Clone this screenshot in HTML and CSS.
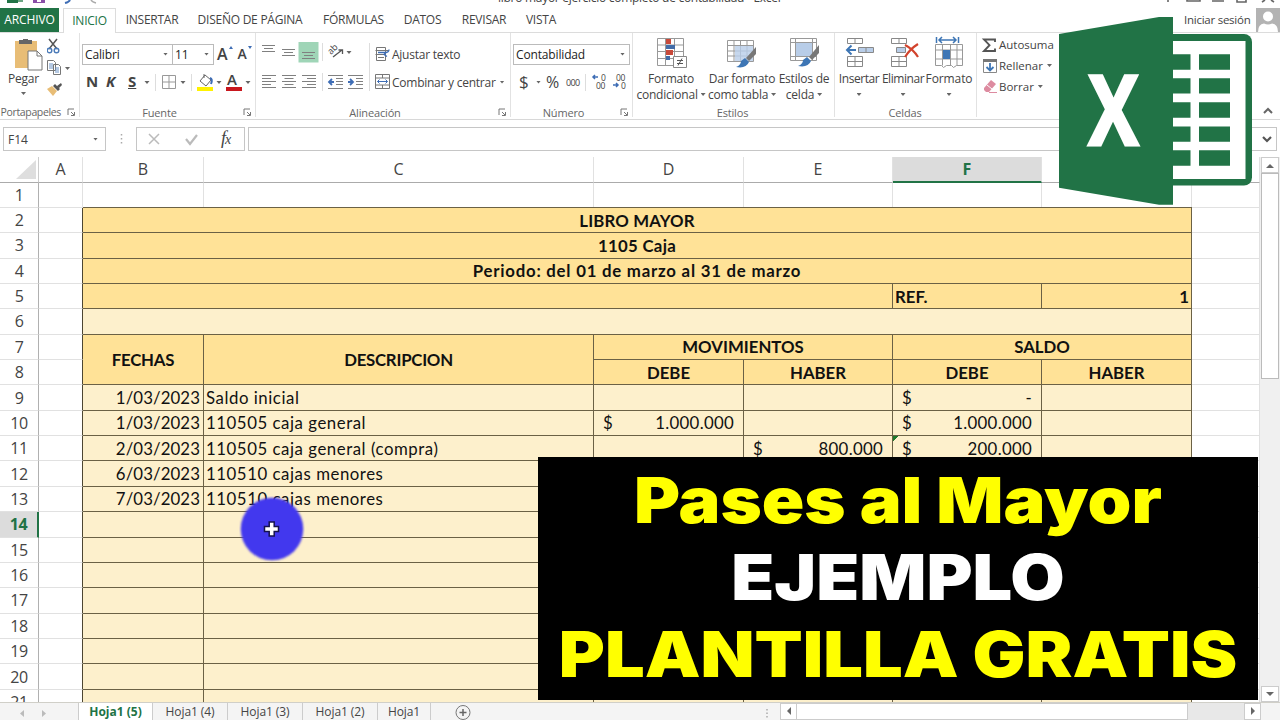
FILE: index.html
```html
<!DOCTYPE html>
<html lang="es">
<head>
<meta charset="utf-8">
<title>Libro mayor - Excel</title>
<link rel="stylesheet" href="styles.css">
</head>
<body>
<div class="app">
  <header class="titlebar">
    <svg class="quick" width="110" height="8"><path d="M7 0h11v3H7z" fill="#217346"/><path d="M18 0h5v2h-5z" fill="#6aa583"/><path d="M33 0h12v3H33z" fill="#8a4fa8"/><path d="M37 0h4v2h-4z" fill="#fff"/><path d="M65 3q4-1 5-3" stroke="#3e6db5" stroke-width="2" fill="none"/><path d="M91 0q1 2 5 3" stroke="#aaa" stroke-width="1.5" fill="none"/></svg>
    <span class="doc">libro mayor ejercicio completo de contabilidad - Excel</span>
    <svg class="win" width="120" height="8"><path d="M8 0v2M27 0v1h13V0M52 1h12M77 0v2h9V0M102 2l3-2M111 0l3 2" stroke="#666" stroke-width="1.6" fill="none"/></svg>
  </header>
  <nav class="tabs">
    <span class="tab file">ARCHIVO</span>
    <span class="tab active">INICIO</span>
    <span class="tab w72">INSERTAR</span>
    <span class="tab w124">DISEÑO DE PÁGINA</span>
    <span class="tab w83">FÓRMULAS</span>
    <span class="tab w55">DATOS</span>
    <span class="tab w68">REVISAR</span>
    <span class="tab w46">VISTA</span>
    <span class="signin">Iniciar sesión</span>
    <svg class="avatar" width="24" height="24"><path d="M0 0h24v24H0z" fill="#b3b3b3"/><circle cx="12" cy="8.500" r="5" fill="#fff"/><path d="M2 24q0-8 6-8.500q4 2 8 0q6 .5 6 8.500z" fill="#fff"/></svg>
  </nav>

  <section class="ribbon">
    <div class="group g-clip">
      <div class="body">
        <div class="big paste">
          <svg width="44" height="37"><path d="M13 7h22v27H13z" fill="#e8bd76"/><path d="M17 6h4V5h5v1h4v4H17z" fill="#666"/><path d="M26 17h9l5 5v14H26z" fill="#fff" stroke="#777"/><path d="M35 17v5h5" fill="none" stroke="#777"/></svg>
          <span>Pegar</span><i class="caret"></i>
        </div>
        <svg width="30" height="70"><g fill="none"><path d="M2 6l8 10M10 6L2 16" stroke="#555" stroke-width="1.500"/><circle cx="2.500" cy="17.500" r="2.300" stroke="#4a7ab8" stroke-width="1.400"/><circle cx="9.500" cy="17.500" r="2.300" stroke="#4a7ab8" stroke-width="1.400"/><path d="M.5 27.500h6l2 2v8h-8zM6.500 31.500h5l2 2v8h-7z" fill="#fff" stroke="#777"/><path d="M2 31h4M2 33h4M2 35h4M8 35h4M8 37h4M8 39h4" stroke="#6b93c7"/></g><path d="M18 34h5l-2.500 3z" fill="#666"/><path d="M0 56l5-3 5 5-4 5z" fill="#e8bd76"/><path d="M6 53l2-2 5 5-2 2zM10 53l4-3 1 2-3 3z" fill="#555"/></svg>
      </div>
      <div class="foot"><span>Portapapeles</span><svg class="launch" width="8" height="8"><path d="M1 7V1h6M4 4l3 3M7.500 4v3.500H4" fill="none" stroke="#777"/></svg></div>
    </div>

    <div class="group g-font">
      <div class="body col">
        <div class="row r1">
          <span class="combo c-font">Calibri<i class="caret"></i></span><span class="combo c-size">11<i class="caret"></i></span>
          <span class="grow">A</span><svg width="6" height="18"><path d="M1 4l2-3 2 3z" fill="#3e6db5"/></svg>
          <span class="shrink">A</span><svg width="6" height="18"><path d="M1 1h4L3 4z" fill="#3e6db5"/></svg>
        </div>
        <div class="row r2">
          <b class="n">N</b><b class="k">K</b><b class="s">S</b>
          <svg width="112" height="22"><g stroke="#ddd"><path d="M14.500 3v17M50.500 3v17"/></g><path d="M3.500 10h5l-2.500 3zM39.500 10h5L42 13zM75.500 10h5L78 13zM104.500 10h5l-2.500 3z" fill="#666"/><path d="M21.500 4.500h13v13h-13zM28 4.500v13M21.500 11h13" fill="none" stroke="#999" stroke-width="1"/><path d="M56 16h16v4H56z" fill="#fff200"/><path d="M59 10l5-6 6 5-5 6z" fill="#fff" stroke="#666"/><path d="M63 7V3" stroke="#666"/><path d="M69 7q3 1 1 6" stroke="#3e6db5" stroke-width="2" fill="none"/><path d="M85 16h16v4H85z" fill="#c8171e"/></svg><span class="fa">A</span>
        </div>
      </div>
      <div class="foot"><span class="mid">Fuente</span><svg class="launch" width="8" height="8"><path d="M1 7V1h6M4 4l3 3M7.500 4v3.500H4" fill="none" stroke="#777"/></svg></div>
    </div>

    <div class="group g-align">
      <div class="body">
        <svg width="117" height="70"><path d="M42.500 9h20v20.500h-20z" fill="#9fd5b7"/><g stroke="#ddd"><path d="M66.500 10v18M66.500 40v18M113.500 10v48"/></g><g stroke="#808080" fill="none"><path d="M6 12.500h13M8 15.500h9M6 18.500h13M26 16.500h13M28 19.500h9M26 22.500h13M46 19.500h13M48 22.500h9M46 25.500h13"/><path d="M6 42.500h14M6 45.500h9M6 48.500h14M6 51.500h9M6 54.500h14M26 42.500h14M28.500 45.500h9M26 48.500h14M28.500 51.500h9M26 54.500h14M46 42.500h14M51 45.500h9M46 48.500h14M51 51.500h9M46 54.500h14M72 42.500h15M80 45.500h7M80 48.500h7M80 51.500h7M72 55.500h15M92 42.500h15M100 45.500h7M100 48.500h7M100 51.500h7M92 55.500h15"/><path d="M77 24l9-7M82.500 17h4v4" stroke="#555" stroke-width="1.300"/></g><path d="M90.500 18h5L93 21z" fill="#666"/><path d="M78 49h-5m3-3l-3 3 3 3M92 49h5m-3-3l3 3-3 3" fill="none" stroke="#3e6db5" stroke-width="1.800"/><text class="ab" transform="translate(75 22) rotate(-45)">ab</text></svg>
        <div class="col wraps">
          <div class="row r1"><svg width="18" height="18"><path d="M2.500 2.500h9v13h-9zM1.500 5.500h13M1.500 9.500h9M4 12.500h6" fill="none" stroke="#777"/><path d="M4 7.500h7q4 0 4-3M13 7l-3 2.500 3 2" fill="none" stroke="#3e6db5" stroke-width="1.300"/></svg><span>Ajustar texto</span></div>
          <div class="row r2"><svg width="18" height="18"><path d="M1.500 1.500h14v14h-14zM1.500 5h14M1.500 12h14M8.500 1.500V5M8.500 12v3.500" fill="none" stroke="#777"/><path d="M3.500 8.500h10M5.500 6.500l-2 2 2 2M11.500 6.500l2 2-2 2" fill="none" stroke="#3e6db5"/></svg><span>Combinar y centrar</span><i class="caret"></i></div>
        </div>
      </div>
      <div class="foot"><span class="mid">Alineación</span><svg class="launch" width="8" height="8"><path d="M1 7V1h6M4 4l3 3M7.500 4v3.500H4" fill="none" stroke="#777"/></svg></div>
    </div>

    <div class="group g-num">
      <div class="body col">
        <div class="row r1"><span class="combo c-num">Contabilidad<i class="caret"></i></span></div>
        <div class="row r2"><span class="dollar">$</span><i class="caret"></i><span class="pct">%</span><span class="zeros">000</span><svg width="40" height="22"><path d="M4.500 3v17" stroke="#ddd"/><path d="M17 6h-5m2-2l-2 2 2 2M32 14h5m-2-2l2 2-2 2" fill="none" stroke="#3e6db5" stroke-width="1.500"/><g class="dec"><text x="20" y="10">0</text><text x="15" y="18">00</text></g></svg><svg class="dec2" width="20" height="22"><g class="dec"><text x="4" y="10">00</text><text x="9" y="18">0</text></g></svg></div>
      </div>
      <div class="foot"><span class="mid">Número</span><svg class="launch" width="8" height="8"><path d="M1 7V1h6M4 4l3 3M7.500 4v3.500H4" fill="none" stroke="#777"/></svg></div>
    </div>

    <div class="group g-styles">
      <div class="body">
        <div class="big b1"><svg width="34" height="36"><path d="M3.500 5.500h26v27h-26zM3.500 12h26M3.500 18.500h26M3.500 25.500h26M11.500 5.500v27M20.500 5.500v27" fill="#fff" stroke="#999"/><path d="M12 6h5v5h-5zM12 17h7v5h-7z" fill="#c8493a"/><path d="M12 12h9v4h-9zM12 23h4v4h-4z" fill="#426ca8"/><path d="M19.500 23.500h13v11h-13z" fill="#fff" stroke="#888"/><path d="M23 27.500h6M23 30.500h6M28 25.500l-4 7" stroke="#555"/></svg><span>Formato</span><span>condicional <i class="caret"></i></span></div>
        <div class="big b2"><svg width="34" height="36"><path d="M2.500 7.500h26v21h-26zM2.500 12.500h26M2.500 18h26M2.500 23h26M9 7.500v21M15.500 7.500v21M22 7.500v21" fill="#fff" stroke="#999"/><path d="M10 13h18v15H10z" fill="#b8cde8" opacity=".8"/><path d="M31 14v7l-7 7-3-3z" fill="#777"/><path d="M20 25l4 4q-3 7-13 5q5-2 5-6z" fill="#3e76b5"/></svg><span>Dar formato</span><span>como tabla <i class="caret"></i></span></div>
        <div class="big b3"><svg width="34" height="36"><path d="M3.500 5.500h26v22h-26zM3.500 9.500h26M3.500 23.500h26M8.500 5.500v22M25.500 5.500v22" fill="#fff" stroke="#999"/><path d="M9 10h16v13H9z" fill="#b8cde8"/><path d="M32 12v8l-7 7-3-3z" fill="#777"/><path d="M20 24l4 4q-3 7-13 5q5-2 5-6z" fill="#3e76b5"/></svg><span>Estilos de</span><span>celda <i class="caret"></i></span></div>
      </div>
      <div class="foot"><span class="mid">Estilos</span></div>
    </div>

    <div class="group g-cells">
      <div class="body">
        <div class="big b4"><svg width="34" height="36"><path d="M5.500 5.500h15v5h-15zM13 5.500v5M5.500 23.500h15v10h-15zM5.500 28.500h15M13 23.500v10" fill="#fff" stroke="#888"/><path d="M16.500 14.500h15v5h-15zM24 14.500v5" fill="#b8cde8" stroke="#888"/><path d="M14 17H5m4.500-4.500L5 17l4.500 4.500" fill="none" stroke="#3e76b5" stroke-width="2"/></svg><span>Insertar</span><i class="caret"></i></div>
        <div class="big b5"><svg width="34" height="36"><path d="M5.500 5.500h15v5h-15zM13 5.500v5M5.500 23.500h15v10h-15zM5.500 28.500h15M13 23.500v10" fill="#fff" stroke="#888"/><path d="M10.500 14.500h9v5h-9z" fill="#b8cde8" stroke="#888"/><path d="M19 12q8 4 13 12M32 11q-8 5-13 13" fill="none" stroke="#d2432d" stroke-width="2.200"/></svg><span>Eliminar</span><i class="caret"></i></div>
        <div class="big b6"><svg width="34" height="36"><path d="M3.500 11.500h27v21h-6l-3 2-2-2h-5l-3 2-2-2h-6zM3.500 17h27M3.500 26h27M10.500 11.500v21M18.500 11.500v21M25 11.500v21" fill="#fff" stroke="#999"/><path d="M11 17h7v9h-7z" fill="#3e76b5"/><path d="M4.500 4v6M26.500 4v6M7 7h17M10 4L7 7l3 3M21 4l3 3-3 3" fill="none" stroke="#3e76b5" stroke-width="1.500"/></svg><span>Formato</span><i class="caret"></i></div>
      </div>
      <div class="foot"><span class="mid">Celdas</span></div>
    </div>

    <div class="group g-edit">
      <div class="row"><svg width="18" height="18"><path d="M14 6V3.500H3l5.500 5.700L3 15h11v-2.500" fill="none" stroke="#555" stroke-width="1.900"/></svg><span>Autosuma</span></div>
      <div class="row"><svg width="18" height="18"><path d="M2.500 2.500h13v13h-13z" fill="#fff" stroke="#888"/><path d="M2 2h14v3H2z" fill="#777"/><path d="M9 6v7M5.500 10L9 13.500l3.500-3.500" fill="none" stroke="#3e76b5" stroke-width="1.800"/></svg><span>Rellenar</span><i class="caret"></i></div>
      <div class="row"><svg width="18" height="18"><path d="M3 10l7-8 5 4-7 8H5l-2-2z" fill="#dd8ba0"/><path d="M6 7l5 4" stroke="#fff"/><path d="M8 14.500h8" stroke="#dd8ba0"/></svg><span>Borrar</span><i class="caret"></i></div>
    </div>
    <svg class="collapse" width="12" height="8"><path d="M2 6l4-4 4 4" fill="none" stroke="#666" stroke-width="2"/></svg>
  </section>

  <section class="formula">
    <span class="namebox">F14<i class="caret"></i></span>
    <svg width="31" height="24"><path d="M15.500 7v12" stroke="#aaa" stroke-width="1.500" stroke-dasharray="1.500 2.500"/></svg>
    <span class="fx"><svg width="66" height="22"><path d="M12 6l10 10M22 6L12 16" stroke="#bbb" stroke-width="1.500"/><path d="M49 11l4 5 7-9" fill="none" stroke="#bbb" stroke-width="2.200"/></svg><em>f</em><em class="x">x</em></span>
    <span class="input"><svg width="12" height="8"><path d="M2 2l4 4 4-4" fill="none" stroke="#555" stroke-width="2.200"/></svg></span>
  </section>

  <main class="work">
    <div class="sheet">
      <div class="h corner"><svg width="20" height="19"><path d="M20 0v19H0z" fill="#dedede"/></svg></div><div class="h">A</div><div class="h">B</div><div class="h">C</div><div class="h">D</div><div class="h">E</div><div class="h sel">F</div><div class="h"></div><div class="h"></div>
      <div class="rh">1</div><div class="w"></div><div class="w"></div><div class="w"></div><div class="w"></div><div class="w"></div><div class="w"></div><div class="w"></div><div class="w"></div>
      <div class="rh">2</div><div class="w e"></div><div class="t m6 top">LIBRO MAYOR</div><div class="w"></div>
      <div class="rh">3</div><div class="w e"></div><div class="t m6 mixed">1105 Caja</div><div class="w"></div>
      <div class="rh">4</div><div class="w e"></div><div class="t m6 period">Periodo: del 01 de marzo al 31 de marzo</div><div class="w"></div>
      <div class="rh">5</div><div class="w e"></div><div class="t m4"></div><div class="t left">REF.</div><div class="t right">1</div><div class="w"></div>
      <div class="rh">6</div><div class="w e"></div><div class="c m6"></div><div class="w"></div>
      <div class="rh">7</div><div class="w e"></div><div class="t v2">FECHAS</div><div class="t v2">DESCRIPCION</div><div class="t m2">MOVIMIENTOS</div><div class="t m2">SALDO</div><div class="w"></div>
      <div class="rh">8</div><div class="w e"></div><div class="t">DEBE</div><div class="t">HABER</div><div class="t">DEBE</div><div class="t">HABER</div><div class="w"></div>
      <div class="rh">9</div><div class="w e"></div><div class="c date">1/03/2023</div><div class="c">Saldo inicial</div><div class="c"></div><div class="c"></div><div class="c money"><span>$</span><span>-</span></div><div class="c"></div><div class="w"></div>
      <div class="rh">10</div><div class="w e"></div><div class="c date">1/03/2023</div><div class="c">110505 caja general</div><div class="c money"><span>$</span><span>1.000.000</span></div><div class="c"></div><div class="c money"><span>$</span><span>1.000.000</span></div><div class="c"></div><div class="w"></div>
      <div class="rh">11</div><div class="w e"></div><div class="c date">2/03/2023</div><div class="c">110505 caja general (compra)</div><div class="c"></div><div class="c money"><span>$</span><span>800.000</span></div><div class="c money flag"><span>$</span><span>200.000</span></div><div class="c"></div><div class="w"></div>
      <div class="rh">12</div><div class="w e"></div><div class="c date">6/03/2023</div><div class="c">110510 cajas menores</div><div class="c"></div><div class="c"></div><div class="c"></div><div class="c"></div><div class="w"></div>
      <div class="rh">13</div><div class="w e"></div><div class="c date">7/03/2023</div><div class="c">110510 cajas menores</div><div class="c"></div><div class="c"></div><div class="c"></div><div class="c"></div><div class="w"></div>
      <div class="rh rsel">14</div><div class="w e"></div><div class="c"></div><div class="c"></div><div class="c"></div><div class="c"></div><div class="c"></div><div class="c"></div><div class="w"></div>
      <div class="rh">15</div><div class="w e"></div><div class="c"></div><div class="c"></div><div class="c"></div><div class="c"></div><div class="c"></div><div class="c"></div><div class="w"></div>
      <div class="rh">16</div><div class="w e"></div><div class="c"></div><div class="c"></div><div class="c"></div><div class="c"></div><div class="c"></div><div class="c"></div><div class="w"></div>
      <div class="rh">17</div><div class="w e"></div><div class="c"></div><div class="c"></div><div class="c"></div><div class="c"></div><div class="c"></div><div class="c"></div><div class="w"></div>
      <div class="rh">18</div><div class="w e"></div><div class="c"></div><div class="c"></div><div class="c"></div><div class="c"></div><div class="c"></div><div class="c"></div><div class="w"></div>
      <div class="rh">19</div><div class="w e"></div><div class="c"></div><div class="c"></div><div class="c"></div><div class="c"></div><div class="c"></div><div class="c"></div><div class="w"></div>
      <div class="rh">20</div><div class="w e"></div><div class="c"></div><div class="c"></div><div class="c"></div><div class="c"></div><div class="c"></div><div class="c"></div><div class="w"></div>
      <div class="rh">21</div><div class="w e"></div><div class="c"></div><div class="c"></div><div class="c"></div><div class="c"></div><div class="c"></div><div class="c"></div><div class="w"></div>
    </div>
    <div class="vscroll">
      <div class="btn"><svg width="8" height="5"><path d="M0 5l4-4 4 4z" fill="#666"/></svg></div>
      <div class="thumb"></div><div class="track"></div>
      <div class="btn"><svg width="8" height="5"><path d="M0 0h8L4 4z" fill="#666"/></svg></div>
    </div>
  </main>

  <footer class="sheets">
    <svg width="78" height="18"><path d="M24 7l-4 3.500 4 3.500zM42 7l4 3.500-4 3.500z" fill="#bbb"/></svg>
    <span class="st on">Hoja1 (5)</span><span class="st">Hoja1 (4)</span><span class="st">Hoja1 (3)</span><span class="st">Hoja1 (2)</span><span class="st last">Hoja1</span>
    <svg class="add" width="18" height="18"><circle cx="9" cy="9.500" r="7" fill="none" stroke="#777"/><path d="M9 6v7M5.500 9.500h7" stroke="#666" stroke-width="1.500"/></svg>
    <svg class="grip" width="4" height="18"><path d="M2 6v9" stroke="#aaa" stroke-width="1.500" stroke-dasharray="1.500 2"/></svg>
    <div class="hscroll"><span class="hb"><svg width="6" height="9"><path d="M5 0v8L1 4z" fill="#666"/></svg></span><span class="ht"></span><span class="he"></span><span class="hb"><svg width="6" height="9"><path d="M1 0v8l4-4z" fill="#666"/></svg></span></div>
  </footer>

  <svg class="cursor" width="66" height="66"><defs><filter id="soft"><feGaussianBlur stdDeviation=".8"/></filter></defs><circle cx="33" cy="33" r="31.300" fill="#4338ee" filter="url(#soft)"/><path d="M30.200 26h5v4.500h4.300v5h-4.300V40h-5v-4.500h-4.700v-5h4.700z" fill="#fff" stroke="#16124e" stroke-width="1.500"/></svg>

  <svg class="logo" width="194" height="188">
    <rect x="90" y="17" width="103" height="151.500" rx="8" fill="#217346"/><path d="M114 24h72.500v138H114z" fill="#fff"/>
    <path d="M0 17L100 0h14v187.700h-14L0 170.700z" fill="#217346"/>
    <path d="M114 37.300h17.500v15.400H114zM140 37.300h31v15.400h-31zM114 61.300h17.500v15.200H114zM140 61.300h31v15.200h-31zM114 85.300h17.500v15.400H114zM140 85.300h31v15.400h-31zM114 109.600h17.500v15.200H114zM140 109.600h31v15.200h-31zM114 133.300h17.500v15.400H114zM140 133.300h31v15.400h-31z" fill="#217346"/>
    <text class="lx" transform="translate(54.500 127.500) scale(.77 1)" text-anchor="middle">X</text>
  </svg>

  <div class="banner"><div class="l1">Pases al Mayor</div><div class="l2">EJEMPLO</div><div class="l3">PLANTILLA GRATIS</div></div>
</div>
</body>
</html>
```
FILE: styles.css
```css
* { box-sizing: border-box; }
body { margin: 0; background: #fff; }
svg { display: block; flex: none; }
.app { position: relative; width: 1280px; height: 720px; overflow: hidden; display: flex; flex-direction: column; background: #fff; font: 12px "Open Sans", "Noto Sans", sans-serif; color: #444; }
.caret { flex: none; display: inline-block; width: 5px; height: 3px; background: #666; clip-path: polygon(0 0, 100% 0, 50% 100%); }

.titlebar { height: 8px; flex: none; display: flex; overflow: hidden; }
.doc { margin: -11px 0 0 388px; width: 660px; line-height: 17px; white-space: nowrap; letter-spacing: -.28px; }
.win { margin-left: 2px; }

.tabs { height: 25px; flex: none; display: flex; border-bottom: 1px solid #dcdcdc; font-size: 12px; letter-spacing: -.25px; }
.tab { text-align: center; line-height: 24px; white-space: nowrap; }
.file { width: 59px; margin-right: 4px; background: #217346; color: #fff; letter-spacing: -.1px; }
.active { width: 53px; height: 25px; border: 1px solid #dcdcdc; border-bottom: 0; background: #fff; color: #217346; line-height: 23px; }
.w72 { width: 72px; } .w124 { width: 124px; } .w83 { width: 83px; } .w55 { width: 55px; } .w68 { width: 68px; } .w46 { width: 46px; }
.signin { margin-left: auto; width: 72px; line-height: 24px; white-space: nowrap; font-size: 11.5px; }

.ribbon { height: 87px; flex: none; display: flex; border-bottom: 1px solid #d8d8d8; white-space: nowrap; }
.group { flex: none; display: flex; flex-direction: column; border-right: 1px solid #e2e2e2; margin-bottom: 2px; }
.body { height: 70px; flex: none; display: flex; }
.col { display: flex; flex-direction: column; }
.row { display: flex; align-items: center; }
.foot { height: 15px; flex: none; display: flex; align-items: center; justify-content: flex-end; font-size: 11px; line-height: 15px; color: #666; letter-spacing: -.15px; padding: 3px 4px 0 2px; }
.foot .mid { flex: 1; text-align: center; }
.launch { margin-left: 6px; }
.big { display: flex; flex-direction: column; align-items: center; line-height: 16px; }
.big svg { margin-bottom: 2px; }
.g-clip { width: 80px; }
.g-clip .foot { font-size: 10.5px; letter-spacing: -.35px; }
.paste .caret { margin-top: 5px; }
.paste { width: 47px; padding-top: 1px; }
.paste svg { margin-bottom: 0; }
.g-font { width: 176px; }
.g-font .body { padding-left: 2px; }
.r1 { height: 20px; margin-top: 11px; }
.r2 { height: 22px; margin-top: 7px; }
.combo { height: 21px; flex: none; border: 1px solid #bbb; display: flex; align-items: center; justify-content: space-between; padding: 0 4px 0 2px; color: #222; letter-spacing: -.15px; }
.c-font { width: 91px; } .c-size { width: 41px; border-left: 0; }
.grow { font-size: 16px; font-weight: 600; margin-left: 3px; line-height: 20px; }
.shrink { font-size: 14px; font-weight: 600; margin-left: 4px; line-height: 20px; }
.r2 b { font-size: 15px; line-height: 20px; margin-top: -2px; }
.r2 .n { width: 20px; margin-left: 4px; } .k { width: 22px; font-style: italic; } .s { width: 13px; text-decoration: underline; }
.fa { margin-left: -26px; width: 14px; font-size: 15px; line-height: 14px; font-weight: 600; margin-top: -6px; }
.g-align { width: 255px; }
.ab { font-size: 9px; fill: #444; }
.wraps { padding-left: 1px; }
.wraps .row span { letter-spacing: -.25px; }
.wraps .caret { margin-left: 4px; }
.g-num { width: 122px; }
.g-num .body { padding-left: 2px; }
.c-num { width: 117px; }
.dollar { font-size: 17px; width: 17px; margin-left: 6px; line-height: 20px; }
.pct { font-size: 16px; margin-left: 5px; width: 20px; line-height: 20px; }
.zeros { font-size: 9px; width: 15px; letter-spacing: -.6px; }
.dec { font-size: 8.5px; fill: #444; letter-spacing: -.3px; }
.dec2 { margin-left: -9px; }
.g-styles { width: 202px; }
.b1 { width: 76px; } .b2 { width: 66px; } .b3 { width: 58px; }
.big span { letter-spacing: -.22px; }
.big span .caret { vertical-align: 3px; margin-left: 0; }
.g-cells { width: 142px; padding-left: 1px; }
.b4 { width: 46px; } .b5 { width: 42px; } .b6 { width: 50px; }
.g-cells .big span { letter-spacing: -.45px; }
.g-cells .b6 span { letter-spacing: -.1px; }
.g-cells .caret { margin-top: 6px; }
.g-edit { width: 90px; border: 0; padding: 1px 0 0 4px; }
.g-edit .row { height: 21px; font-size: 11.5px; }
.g-edit .caret { margin-left: 4px; }
.collapse { margin: 74px 0 0 195px; }

.formula { height: 37px; flex: none; display: flex; padding: 7px 3px 6px; }
.formula > * { height: 24px; }
.namebox { width: 103px; border: 1px solid #c6c6c6; display: flex; align-items: center; justify-content: space-between; padding: 0 7px 0 4px; }
.fx { margin-left: -1px; width: 109px; border: 1px solid #c6c6c6; display: flex; }
.fx em { font: italic 18px/20px "Liberation Serif", serif; margin-left: 18px; }
.fx em.x { font-size: 14px; line-height: 24px; margin-left: -1px; }
.input { margin-left: 3px; flex: 1; border: 1px solid #c6c6c6; display: flex; align-items: center; justify-content: flex-end; padding-right: 3px; }

.work { height: 545px; flex: none; display: flex; overflow: hidden; background: #fff; }
.sheet { width: 1260px; display: grid; grid-template-columns: 39px 44px 121px 390px 150px 149px 149px 150px 68px; grid-template-rows: 25.5px; grid-auto-rows: 25.36px; font: 16.8px "Lato", "Open Sans", sans-serif; color: #111; align-content: start; height: 560px; }
.sheet > div { white-space: nowrap; display: flex; align-items: center; min-width: 0; border-right: 1px solid #e1e1e1; border-bottom: 1px solid #e1e1e1; }
.sheet > .h, .sheet > .rh { justify-content: center; font: 16px "Open Sans", "Noto Sans", sans-serif; color: #444; }
.sheet > .h { border-bottom-color: #ababab; }
.sheet > .corner { justify-content: flex-end; padding-right: 2px; border-right-color: #ccc; }
.sheet > .rh { border-right-color: #b0b0b0; letter-spacing: -.4px; }
.sheet > .sel, .sheet > .rsel { background: #dcdcdc; color: #217346; font-weight: 700; }
.sheet > .sel { border-bottom: 2px solid #217346; }
.sheet > .rsel { border-right: 2px solid #217346; }
.sheet > .e { border-right-color: #4d4632; }
.sheet > .t, .sheet > .c { border-color: #6b6145; background: #fdf0cc; padding: 0 2px; letter-spacing: .55px; }
.sheet > .t { background: #ffe297; justify-content: center; font-weight: 700; letter-spacing: 0; }
.sheet > .top { box-shadow: 0 -1px #6b6145; letter-spacing: .15px; }
.sheet > .mixed { letter-spacing: .3px; }
.sheet > .period { letter-spacing: .77px; }
.sheet > .v2 { letter-spacing: -.25px; }
.sheet > .left { justify-content: flex-start; }
.sheet > .right { justify-content: flex-end; }
.sheet > .date { justify-content: flex-end; padding-right: 3px; letter-spacing: .1px; }
.sheet > .money { justify-content: space-between; padding: 0 9px 0 9px; letter-spacing: .3px; }
.sheet > .flag { background: linear-gradient(135deg, #1e7a2e 4px, transparent 4px) #fdf0cc; }
.m6 { grid-column: span 6; } .m4 { grid-column: span 4; } .m2 { grid-column: span 2; } .v2 { grid-row: span 2; }

.vscroll { flex: 1; display: flex; flex-direction: column; padding: 0 1px 0 1px; background: #f0f0f0; }
.btn { height: 16px; background: #fff; border: 1px solid #ccc; display: flex; align-items: center; justify-content: center; }
.thumb { height: 206px; background: #fff; border: 1px solid #bbb; }
.track { flex: 1; }

.sheets { height: 18px; flex: none; display: flex; background: #f4f4f4; border-top: 1px solid #d0cfc8; }
.st { width: 75px; border-right: 1px solid #ccc; text-align: center; line-height: 18px; white-space: nowrap; letter-spacing: -.1px; }
.on { background: #fff; color: #217346; font-weight: 700; border-left: 1px solid #ccc; letter-spacing: 0; width: 75px; }
.last { width: 53px; }
.add { margin-left: 23px; }
.grip { margin-left: 293px; }
.hscroll { margin-left: 11px; width: 481px; display: flex; }
.hb { width: 17px; flex: none; background: #fff; border: 1px solid #ccc; display: flex; align-items: center; justify-content: center; }
.ht { width: 391px; background: #fff; border: 1px solid #ccc; border-left: 0; }
.he { flex: 1; background: #e8e8e8; }

.cursor { position: absolute; left: 239px; top: 496px; }
.logo { position: absolute; left: 1059px; top: 17px; }
.lx { font: 700 97px "Open Sans", sans-serif; fill: #fff; stroke: #fff; stroke-width: 3px; }
.banner { position: absolute; left: 538px; top: 457px; width: 720px; height: 243px; background: #000; color: #ff0; font: 900 63px/77px Inter, "Liberation Sans", sans-serif; text-align: center; white-space: nowrap; padding-top: 5px; }
.banner div { transform: scaleX(1.115); }
.l2 { color: #fff; }
```
